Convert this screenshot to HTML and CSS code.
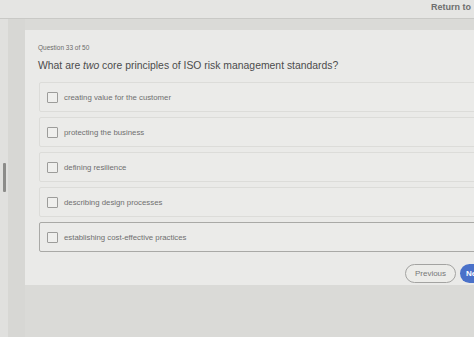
FILE: index.html
```html
<!DOCTYPE html>
<html>
<head>
    <title>Question 33 of 50</title>
    <link rel="stylesheet" href="styles.css">
</head>
<body>
    <div class="topbar">
        <span class="return-link">Return to</span>
    </div>
    <div class="page">
        <div class="rail">
            <div class="scroll-thumb"></div>
        </div>
        <div class="side"></div>
        <div class="card">
            <div class="counter">Question 33 of 50</div>
            <h1 class="question">What are <em>two</em> core principles of ISO risk management standards?</h1>
            <div class="options">
                <label class="option"><span class="box"></span>creating value for the customer</label>
                <label class="option"><span class="box"></span>protecting the business</label>
                <label class="option"><span class="box"></span>defining resilience</label>
                <label class="option"><span class="box"></span>describing design processes</label>
                <label class="option focused"><span class="box"></span>establishing cost-effective practices</label>
            </div>
            <div class="nav">
                <button type="button" class="btn-prev">Previous</button>
                <button type="button" class="btn-next">Next</button>
            </div>
        </div>
    </div>
</body>
</html>
```

FILE: styles.css
```css
body {
    margin: 0;
    width: 474px;
    height: 337px;
    overflow: hidden;
    background: #dadad7;
    font-family: "Liberation Sans", Arial, sans-serif;
}
.topbar {
    height: 18px;
    background: #e5e5e3;
    border-bottom: 1px solid #c9c9c6;
    display: flex;
    padding-left: 431px;
    white-space: nowrap;
    overflow: hidden;
}
.return-link {
    font-size: 9px;
    font-weight: bold;
    color: #6e6e6e;
    line-height: 14px;
}
.page {
    display: flex;
    height: 318px;
}
.rail {
    width: 8px;
    background: #e0e0de;
    padding-top: 144px;
    box-sizing: border-box;
}
.scroll-thumb {
    width: 3px;
    height: 29px;
    margin-left: 3px;
    background: #8c8c8a;
    border-radius: 1px;
}
.side {
    width: 17px;
    background: #d7d7d4;
}
.card {
    flex: 1;
    margin-top: 11px;
    height: 255px;
    background: #eaeae8;
    padding: 14px 0 0 13px;
    box-sizing: border-box;
    overflow: hidden;
}
.counter {
    font-size: 6.5px;
    color: #6a6a6a;
    line-height: 8px;
}
.question {
    margin: 7px 0 0;
    font-size: 10.4px;
    font-weight: normal;
    color: #4c4c4c;
    line-height: 14px;
}
.options {
    margin: 9px -30px 0 1px;
    display: flex;
    flex-direction: column;
    gap: 5px;
}
.option {
    display: flex;
    align-items: center;
    height: 30px;
    box-sizing: border-box;
    border: 1px solid #dcdcd9;
    border-radius: 2px;
    padding-left: 7px;
    font-size: 7.8px;
    color: #6f6f6f;
    background: #ebebe9;
}
.option.focused {
    border-color: #a9a9a6;
}
.box {
    width: 9px;
    height: 9px;
    border: 1px solid #9c9c9a;
    border-radius: 1px;
    margin-right: 6px;
    background: #efefed;
}
.nav {
    display: flex;
    justify-content: flex-end;
    gap: 4px;
    margin: 12px -30px 0 0;
}
.btn-prev {
    width: 51px;
    height: 19px;
    border: 1px solid #a3a3a1;
    border-radius: 10px;
    background: #ecece9;
    color: #777;
    font-family: "Liberation Sans", Arial, sans-serif;
    font-size: 8px;
    padding: 0;
}
.btn-next {
    width: 44px;
    height: 19px;
    border: none;
    border-radius: 10px;
    background: #4a71c9;
    color: #fff;
    font-family: "Liberation Sans", Arial, sans-serif;
    font-size: 8px;
    font-weight: bold;
    text-align: left;
    padding: 0 0 0 6px;
}
```
